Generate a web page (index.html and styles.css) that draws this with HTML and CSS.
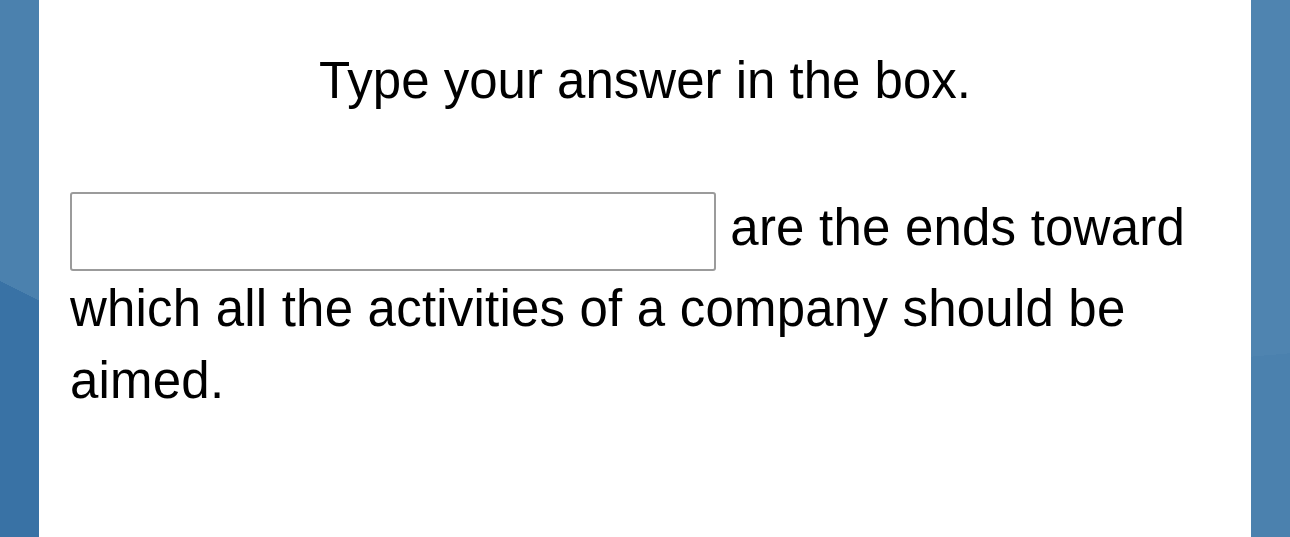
FILE: index.html
```html
<!DOCTYPE html>
<html>
<head>
  <title>Fill in the blank</title>
  <link rel="stylesheet" href="styles.css">
</head>
<body>
  <div class="side side-left"></div>

  <div class="card">
    <h2 class="prompt">Type your answer in the box.</h2>

    <p class="question">
      <input type="text" class="blank" aria-label="Answer"> are the ends toward which all the activities of a company should be aimed.
    </p>
  </div>

  <div class="side side-right"></div>
</body>
</html>
```

FILE: styles.css
```css
html, body {
  height: 100%;
}

body {
  display: flex;
  margin: 0;
  padding: 0;
  background-color: #4a80ad;
  font-family: 'Liberation Sans', Arial, sans-serif;
  color: #000;
  overflow: hidden;
}

.side {
  width: 39px;
  flex: none;
}

.side-left {
  background: linear-gradient(207deg, #4b81ae 0 54%, #3972a5 54%);
}

.side-right {
  background: linear-gradient(175deg, #4f84b0 0 66%, #4b81ae 66%);
}

.card {
  flex: 1;
  background-color: #fff;
  padding: 0 31px;
}

.prompt {
  margin: 51px 0 0;
  text-align: center;
  font-size: 51px;
  font-weight: normal;
  line-height: 60px;
}

.question {
  margin: 81px 0 0;
  font-size: 51px;
  line-height: 72px;
  letter-spacing: 0.2px;
}

.blank {
  width: 646px;
  height: 79px;
  box-sizing: border-box;
  margin: 0 0 2px;
  padding: 0 10px;
  border: 2px solid #9b9b9b;
  border-radius: 3px;
  vertical-align: top;
  font-size: 40px;
  font-family: inherit;
}
```
